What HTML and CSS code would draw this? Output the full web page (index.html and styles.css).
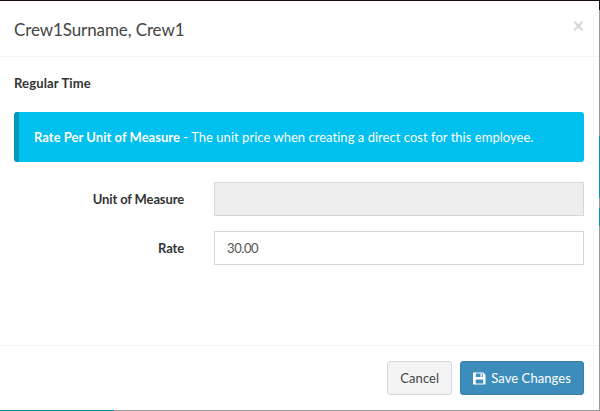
FILE: index.html
```html
<!DOCTYPE html>
<html>
<head>
    <meta name="viewport" content="width=device-width, initial-scale=1.0">
    <title>Crew1Surname, Crew1</title>
    <link rel="stylesheet" href="styles.css">
</head>
<body>
    <div class="modal">
        <div class="modal-header">
            <h4 class="modal-title">Crew1Surname, Crew1</h4>
            <span class="close">×</span>
        </div>
        <div class="modal-body">
            <h5 class="section-title">Regular Time</h5>
            <div class="callout">
                <b>Rate Per Unit of Measure</b> - The unit price when creating a direct cost for this employee.
            </div>
            <div class="form-row">
                <label class="form-label">Unit of Measure</label>
                <input class="form-input" type="text" disabled>
            </div>
            <div class="form-row">
                <label class="form-label">Rate</label>
                <input class="form-input" type="text" value="30.00">
            </div>
        </div>
        <div class="modal-footer">
            <button class="btn btn-default">Cancel</button>
            <button class="btn btn-primary">
                <svg class="btn-icon" viewBox="0 0 14 14" width="13" height="13">
                    <path fill="currentColor" fill-rule="evenodd" d="M1 0.500h10l2.500 2.500v9.500a1 1 0 0 1-1 1h-11.500a1 1 0 0 1-1-1v-11a1 1 0 0 1 1-1zM3 1.500v4h7.500v-4zM8 2h1.500v3h-1.500zM3 8v4.500h8v-4.500z"/>
                </svg>
                Save Changes
            </button>
        </div>
    </div>
    <div class="page-strip">
        <div class="page-strip-fill"></div>
    </div>
</body>
</html>
```

FILE: styles.css
```css
html, body {
    height: 100%;
}

body {
    margin: 0;
    display: flex;
    flex-direction: column;
    background: linear-gradient(to bottom, #1a0c0c 0 10px, #9a9a9a 10px 136px, #0097bc 136px 198px, #9a9a9a 198px 208px, #0097bc 208px 226px, #9a9a9a 226px);
    font-family: Lato, "Noto Sans", sans-serif;
    font-size: 13px;
    color: #333;
    overflow: hidden;
    border-top: 1px solid #1a0c0c;
    box-sizing: border-box;
}

.modal {
    flex: 1;
    display: flex;
    flex-direction: column;
    margin-right: 1px;
    background-color: #fff;
}

.modal-header {
    height: 56px;
    box-sizing: border-box;
    flex: none;
    display: flex;
    justify-content: space-between;
    padding: 0 15px 0 14px;
    border-bottom: 1px solid #f4f4f4;
}

.modal-title {
    margin: 0;
    font-size: 17px;
    font-weight: 400;
    line-height: 57px;
    letter-spacing: -0.1px;
    color: #444;
}

.close {
    font-size: 20px;
    font-weight: 700;
    line-height: 48px;
    color: #d5d5d5;
}

.modal-body {
    flex: 1;
    padding: 0 15px 0 14px;
}

.section-title {
    margin: 0;
    padding-top: 16px;
    font-size: 13px;
    font-weight: 700;
    line-height: 20px;
    letter-spacing: 0.15px;
    color: #333;
}

.callout {
    margin-top: 19px;
    height: 50px;
    box-sizing: border-box;
    padding-left: 15px;
    border-left: 5px solid #0097bc;
    border-radius: 3px;
    background-color: #00c0ef;
    color: #fff;
    line-height: 50px;
    letter-spacing: 0.03px;
    white-space: nowrap;
}

.form-row {
    display: flex;
    align-items: center;
    margin-bottom: 15px;
}

.callout + .form-row {
    margin-top: 20px;
}

.form-label {
    width: 170px;
    margin-right: 30px;
    text-align: right;
    font-weight: 700;
    letter-spacing: -0.13px;
}

.form-input {
    flex: 1;
    height: 34px;
    box-sizing: border-box;
    padding: 6px 12px;
    border: 1px solid #d2d6de;
    background-color: #fff;
    font-family: inherit;
    font-size: 13px;
    letter-spacing: -0.4px;
    color: #555;
}

.form-input:disabled {
    background-color: #eee;
}

.modal-footer {
    flex: none;
    display: flex;
    justify-content: flex-end;
    gap: 8px;
    height: 65px;
    box-sizing: border-box;
    padding: 15px 15px 0 0;
    border-top: 1px solid #f4f4f4;
}

.btn {
    display: flex;
    align-items: center;
    gap: 5px;
    height: 34px;
    box-sizing: border-box;
    padding: 0 12px;
    border: 1px solid transparent;
    border-radius: 3px;
    font-family: inherit;
    font-size: 13px;
    letter-spacing: 0.08px;
}

.btn-default {
    background-color: #f4f4f4;
    border-color: #d2d6de;
    color: #444;
}

.btn-primary {
    background-color: #3c8dbc;
    border-color: #367fa9;
    color: #fff;
}

.page-strip {
    flex: none;
    height: 1px;
    background-color: #9a9a9a;
}

.page-strip-fill {
    width: 114px;
    height: 1px;
    background-color: #00829f;
}
```
